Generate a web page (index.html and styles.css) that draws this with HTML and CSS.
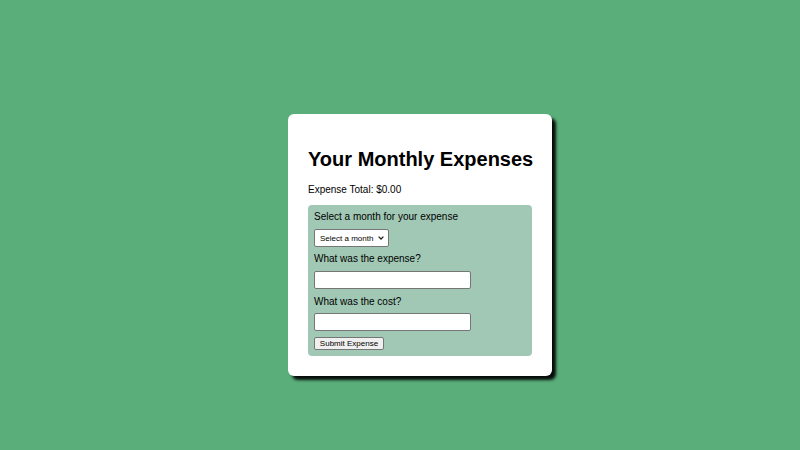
FILE: index.html
```html
<!DOCTYPE html>
<html lang="en">
<head>
<meta charset="utf-8">
<title>Monthly Expenses</title>
<link rel="stylesheet" href="styles.css">
</head>
<body>
<main class="page">
  <section class="card">
    <h1 class="title">Your Monthly Expenses</h1>
    <p class="total">Expense Total: $0.00</p>
    <form class="expense-form">
      <label class="label label-month" for="month">Select a month for your expense</label>
      <select id="month" class="month-select">
        <option>Select a month</option>
        <option>January</option>
        <option>February</option>
        <option>March</option>
        <option>April</option>
        <option>May</option>
        <option>June</option>
        <option>July</option>
        <option>August</option>
        <option>September</option>
        <option>October</option>
        <option>November</option>
        <option>December</option>
      </select>
      <label class="label label-name" for="name">What was the expense?</label>
      <input id="name" class="text-input input-name" type="text">
      <label class="label label-cost" for="cost">What was the cost?</label>
      <input id="cost" class="text-input input-cost" type="text">
      <button type="button" class="submit">Submit Expense</button>
    </form>
  </section>
</main>
</body>
</html>
```
FILE: styles.css
```css
html, body {
  margin: 0;
  height: 100%;
}

body {
  background: #5aae7a;
  font-family: "Liberation Sans", Arial, sans-serif;
  color: #000;
}

.page {
  box-sizing: border-box;
  height: 100%;
  padding: 40px 0 0 40px;
  display: flex;
  align-items: center;
  justify-content: center;
}

.card {
  flex: none;
  width: 224px;
  padding: 20px;
  background: #fff;
  border-radius: 6px;
  box-shadow: 4px 4px 3px rgba(0, 0, 0, 0.92);
}

.title {
  margin: 11px 0 10px;
  font-size: 20px;
  line-height: 28px;
  font-weight: bold;
  white-space: nowrap;
}

.total {
  margin: 0 0 8px;
  font-size: 10px;
  line-height: 14px;
}

.expense-form {
  background: #a0c8b4;
  border-radius: 4px;
  padding: 5px 6px 6px;
  display: flex;
  flex-direction: column;
  align-items: flex-start;
}

.label {
  font-size: 10px;
  line-height: 14px;
}

.label-month { margin-bottom: 5px; }
.label-name { margin-bottom: 5px; }
.label-cost { margin-bottom: 4px; }

/* select with a small chevron instead of the native arrow */
.month-select {
  box-sizing: border-box;
  width: 75px;
  height: 18px;
  margin: 0 0 5px;
  padding: 0 0 0 5px;
  font-family: "Liberation Sans", Arial, sans-serif;
  font-size: 8px;
  color: #000;
  appearance: none;
  -webkit-appearance: none;
  background: #fff url("data:image/svg+xml,%3Csvg xmlns='http://www.w3.org/2000/svg' width='6' height='4' viewBox='0 0 6 4'%3E%3Cpath d='M0.6 0.6 L3 3 L5.4 0.6' fill='none' stroke='%23222' stroke-width='1.3'/%3E%3C/svg%3E") no-repeat right 4px center;
  border: 1px solid #767676;
  border-radius: 2px;
}

.text-input {
  box-sizing: border-box;
  width: 157px;
  height: 18px;
  margin: 0;
  border: 1px solid #767676;
  border-radius: 2px;
  background: #fff;
}

.input-name { margin-bottom: 6px; }
.input-cost { margin-bottom: 6px; }

.submit {
  box-sizing: border-box;
  width: 70px;
  height: 13px;
  padding: 0;
  margin: 0;
  font-family: "Liberation Sans", Arial, sans-serif;
  font-size: 8px;
  line-height: 11px;
  color: #000;
  background: #efefef;
  border: 1px solid #767676;
  border-radius: 2px;
}
```
